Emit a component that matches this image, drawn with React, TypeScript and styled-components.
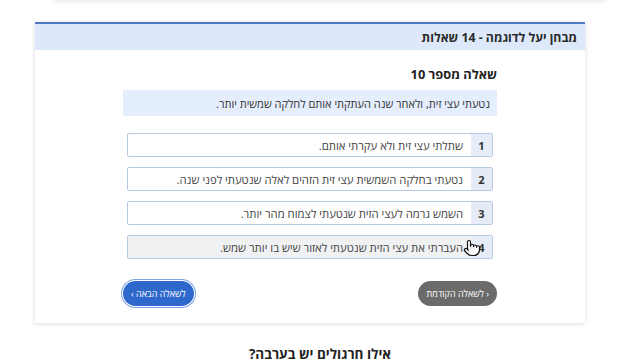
import React from "react";
import styled, { createGlobalStyle } from "styled-components";
import { Pointer } from "lucide-react";

const Global = createGlobalStyle`
  html, body { margin: 0; padding: 0; background: #ffffff; overflow: hidden; }
  body { font-family: "Open Sans", "Noto Sans", "DejaVu Sans", sans-serif; direction: rtl; }
`;

const Page = styled.div`
  width: 640px;
  height: 360px;
  overflow: hidden;
  position: relative;
`;

const PrevCard = styled.div`
  margin: -12px 35px 0 55px;
  height: 12px;
  background: #fff;
  box-shadow: 0 1px 4px rgba(0, 0, 0, 0.12);
`;

const Card = styled.section`
  margin: 22px 55px 0 35px;
  background: #fff;
  box-shadow: 0 1px 5px rgba(0, 0, 0, 0.14);
  border-top: 2px solid #4d7cc4;
  padding-bottom: 17px;
`;

const Header = styled.div`
  background: #dde9fb;
  height: 26px;
  display: flex;
  align-items: center;
  padding: 0 8px;
  font-size: 12.3px;
  font-weight: 700;
  color: #2b2b2b;
`;

const Body = styled.div`
  padding: 0 88px 0 88px;
  display: flex;
  flex-direction: column;
`;

const QTitle = styled.h2`
  margin: 14px 0 0 0;
  font-size: 12.8px;
  font-weight: 700;
  color: #222;
  line-height: 20px;
`;

const QText = styled.div`
  margin-top: 6px;
  background: #e4eefc;
  height: 26px;
  display: flex;
  align-items: center;
  padding: 0 7px;
  font-size: 11px;
  color: #333;
`;

const Options = styled.div`
  display: flex;
  flex-direction: column;
  gap: 10px;
  margin: 17px 4px 0 4px;
`;

const Option = styled.div<{ $hover?: boolean }>`
  position: relative;
  height: 22px;
  border: 1px solid #b9c9e3;
  border-radius: 2px;
  display: flex;
  align-items: stretch;
  background: ${(p) => (p.$hover ? "#f0f1f3" : "#fff")};
  font-size: 11.3px;
  color: #444;
`;

const Num = styled.div`
  width: 21px;
  background: #e5ecf8;
  display: flex;
  align-items: center;
  justify-content: center;
  font-weight: 700;
  font-size: 11px;
  color: #333;
`;

const OptText = styled.div`
  display: flex;
  align-items: center;
  padding: 0 8px;
`;

const Cursor = styled.div`
  position: absolute;
  right: 11px;
  top: 3px;
  width: 18px;
  height: 18px;
`;

const Buttons = styled.div`
  display: flex;
  justify-content: space-between;
  margin-top: 22px;
`;

const Pill = styled.button<{ $kind: "blue" | "gray" }>`
  height: 25px;
  border-radius: 13px;
  border: none;
  font-family: inherit;
  font-size: 9px;
  color: #fff;
  padding: 0 8px;
  display: flex;
  align-items: center;
  gap: 3px;
  background: ${(p) => (p.$kind === "blue" ? "#2f68cc" : "#6b6b6b")};
  box-shadow: ${(p) =>
    p.$kind === "blue" ? "0 0 0 1px #fff, 0 0 0 2px #7ea3e2" : "none"};
`;

const Next = styled.h3`
  margin: 22px 0 0 0;
  text-align: center;
  font-size: 13.5px;
  font-weight: 700;
  color: #222;
`;

const options = [
  "שתלתי עצי זית ולא עקרתי אותם.",
  "נטעתי בחלקה השמשית עצי זית הזהים לאלה שנטעתי לפני שנה.",
  "השמש גרמה לעצי הזית שנטעתי לצמוח מהר יותר.",
  "העברתי את עצי הזית שנטעתי לאזור שיש בו יותר שמש.",
];

export default function App() {
  return (
    <Page>
      <Global />
      <PrevCard />
      <Card>
        <Header>מבחן יעל לדוגמה - 14 שאלות</Header>
        <Body>
          <QTitle>שאלה מספר 10</QTitle>
          <QText>נטעתי עצי זית, ולאחר שנה העתקתי אותם לחלקה שמשית יותר.</QText>
          <Options>
            {options.map((o, i) => (
              <Option key={i} $hover={i === 3}>
                <Num>{i + 1}</Num>
                <OptText>{o}</OptText>
                {i === 3 && (
                  <Cursor>
                    <Pointer size={18} color="#111" fill="#fff" strokeWidth={1.6} />
                  </Cursor>
                )}
              </Option>
            ))}
          </Options>
          <Buttons>
            <Pill $kind="gray">‹ לשאלה הקודמת</Pill>
            <Pill $kind="blue">לשאלה הבאה ›</Pill>
          </Buttons>
        </Body>
      </Card>
      <Next>אילו חרגולים יש בערבה?</Next>
    </Page>
  );
}
